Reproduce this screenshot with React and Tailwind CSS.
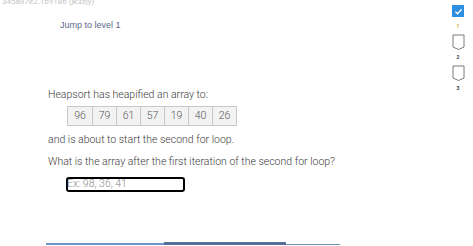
import React from "react";

const values = [96, 79, 61, 57, 19, 40, 26];

function Shield({ label }) {
  return (
    <div className="flex flex-col items-center">
      <svg width="13" height="17" viewBox="0 0 13 17">
        <path d="M1 1 H12 V13 L6.5 15.5 L1 13 Z" fill="#fff" stroke="#7a7a7a" strokeWidth="1" />
      </svg>
      <span className="text-[5px] leading-none mt-[4px] text-[#2b3550] font-bold">{label}</span>
    </div>
  );
}

export default function App() {
  return (
    <div
      className="w-[473px] h-[246px] overflow-hidden bg-white flex"
      style={{ fontFamily: "Roboto, 'Liberation Sans', sans-serif" }}
    >
      <div className="flex-1 flex flex-col">
        <div className="text-[8px] leading-none text-[#c4c4c4] ml-[2px] -mt-[2px]">
          345a87e2.1b9186 (jk3zjy)
        </div>
        <div
          className="ml-[60px] mt-[14px] text-[9px] leading-[11px] text-[#5b6b8c]"
          style={{ fontFamily: "'Liberation Sans', Arial, sans-serif" }}
        >
          Jump to level 1
        </div>

        <div className="ml-[48px] mt-[57px] text-[10.5px] leading-[14px] font-light text-[#3a3a3a]">
          <div>Heapsort has heapified an array to:</div>
          <div className="ml-[19px] mt-[4px] flex w-fit border border-[#c8c8c8] bg-[#f3f3f3]">
            {values.map((v, i) => (
              <div
                key={i}
                className={`w-[24px] h-[18px] flex items-center justify-center text-[#555] ${
                  i > 0 ? "border-l border-[#c8c8c8]" : ""
                }`}
              >
                {v}
              </div>
            ))}
          </div>
          <div className="mt-[7px]">and is about to start the second for loop.</div>
          <div className="mt-[8px]">What is the array after the first iteration of the second for loop?</div>
          <div className="ml-[18px] mt-[8px] w-[119px] h-[15px] border-2 border-black rounded-[3px] flex items-center text-[#8a8a8a] text-[10.5px] leading-none">
            <span className="-ml-[1px]">Ex: 98, 36, 41</span>
          </div>
        </div>

        <div className="mt-auto mb-[1px] ml-[46px] flex items-end">
          <div className="w-[118px] h-[2px] bg-[#6f95c4]" />
          <div className="w-[122px] h-[3px] bg-[#566f98]" />
          <div className="w-[54px] h-[1px] bg-[#6f8fb8]" />
        </div>
      </div>

      <div className="w-[20px] mr-[5px] pt-[5px] flex flex-col items-center">
        <div className="w-[12px] h-[12px] bg-[#2d8fe0] flex items-center justify-center">
          <svg width="9" height="9" viewBox="0 0 10 10">
            <path d="M1.5 5.2 L4 7.5 L8.5 2.5" fill="none" stroke="#fff" strokeWidth="1.4" />
          </svg>
        </div>
        <span className="text-[5px] leading-none mt-[7px] text-[#e0a820] font-bold">1</span>
        <div className="mt-[5px]">
          <Shield label="2" />
        </div>
        <div className="mt-[5px]">
          <Shield label="3" />
        </div>
      </div>
    </div>
  );
}
